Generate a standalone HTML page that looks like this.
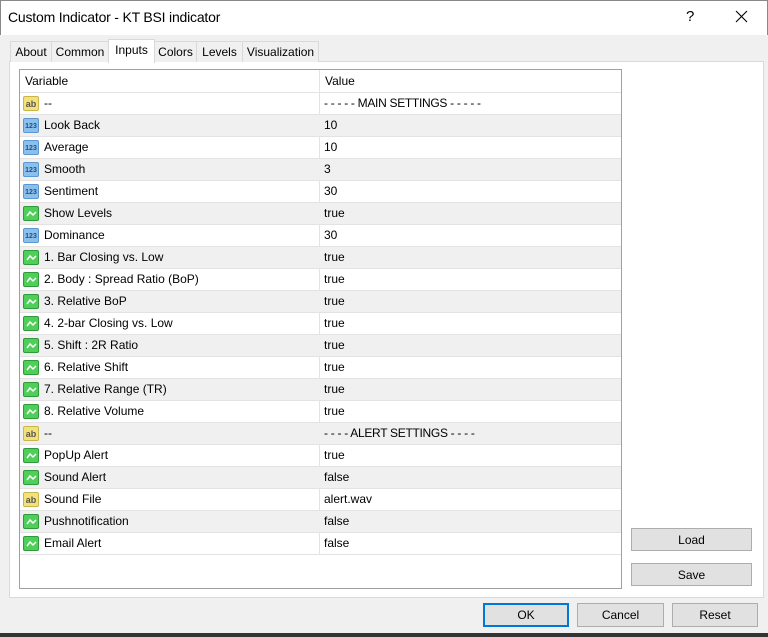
<!DOCTYPE html><html><head><style>
body{margin:0;width:768px;height:637px;background:#f0f0f0;font-family:"Liberation Sans",sans-serif;font-size:12px;color:#000;position:relative;overflow:hidden}
.a{position:absolute}
.title{left:0;top:0;width:766px;height:34px;background:#fff;border:1px solid #888;border-bottom:none}
.tab{top:41px;height:20px;border:1px solid #d9d9d9;border-bottom:none;background:#f0f0f0;line-height:20px;text-align:center;font-size:12px}
.panel{left:9px;top:61px;width:753px;height:535px;background:#fff;border:1px solid #d9d9d9}
.grid{left:19px;top:69px;width:601px;height:518px;border:1px solid #a0a0a0;background:#fff}
.row{position:absolute;left:0;width:601px;height:22px;border-top:1px solid #e3e3e3;box-sizing:border-box;line-height:21px}
.g{background:#f0f0f0}
.row span{position:absolute;left:24px}
.row b{font-weight:normal;position:absolute;left:304px}
.ic{position:absolute;left:3px;top:3px;width:16px;height:15px;border-radius:2px;font-size:7px;line-height:15px;text-align:center;font-weight:bold}
.ab{background:#f3e27a;border:1px solid #c9b64a;color:#555;box-sizing:border-box;font-size:9px}
.n{background:#8cc0ec;border:1px solid #5c98cf;color:#1a4f8a;box-sizing:border-box}
.t{background:#4fcf5a;border:1px solid #2e9a38;box-sizing:border-box}
.btn{background:#e1e1e1;border:1px solid #adadad;text-align:center;line-height:22px;box-sizing:border-box;font-size:12px}
</style></head><body>
<div class="a title"></div>
<div class="a" style="left:8px;top:9px;font-size:14px;letter-spacing:-0.2px">Custom Indicator - KT BSI indicator</div>
<div class="a" style="left:686px;top:8px;font-size:15px">?</div>
<svg class="a" style="left:735px;top:10px" width="13" height="13"><path d="M1 1L12 12M12 1L1 12" stroke="#000" stroke-width="1.1"/></svg>
<div class="a panel"></div>
<div class="a tab" style="left:10px;width:40px">About</div>
<div class="a tab" style="left:51px;width:56px">Common</div>
<div class="a tab" style="left:108px;top:39px;height:23px;width:45px;background:#fff;z-index:2">Inputs</div>
<div class="a tab" style="left:154px;width:41px">Colors</div>
<div class="a tab" style="left:196px;width:45px">Levels</div>
<div class="a tab" style="left:242px;width:75px">Visualization</div>
<div class="a grid">
<div class="row" style="top:0;border:none;line-height:22px"><span style="left:5px">Variable</span><b style="left:305px">Value</b></div>
<div class="a" style="left:299px;top:0;width:1px;height:484px;background:#e3e3e3"></div>
<div id="rows"></div>
</div>
<div class="a btn" style="left:631px;top:528px;width:121px;height:23px">Load</div>
<div class="a btn" style="left:631px;top:563px;width:121px;height:23px">Save</div>
<div class="a btn" style="left:483px;top:603px;width:86px;height:24px;border:2px solid #0078d7;line-height:20px">OK</div>
<div class="a btn" style="left:577px;top:603px;width:87px;height:24px">Cancel</div>
<div class="a btn" style="left:672px;top:603px;width:86px;height:24px">Reset</div>
<div class="a" style="left:0;top:633px;width:768px;height:4px;background:#333"></div>
<script>
var d=[["ab","--","- - - - - MAIN SETTINGS - - - - -"],["n","Look Back","10"],["n","Average","10"],["n","Smooth","3"],["n","Sentiment","30"],["t","Show Levels","true"],["n","Dominance","30"],["t","1. Bar Closing vs. Low","true"],["t","2. Body : Spread Ratio (BoP)","true"],["t","3. Relative BoP","true"],["t","4. 2-bar Closing vs. Low","true"],["t","5. Shift : 2R Ratio","true"],["t","6. Relative Shift","true"],["t","7. Relative Range (TR)","true"],["t","8. Relative Volume","true"],["ab","--","- - - - ALERT SETTINGS - - - -"],["t","PopUp Alert","true"],["t","Sound Alert","false"],["ab","Sound File","alert.wav"],["t","Pushnotification","false"],["t","Email Alert","false"]];
var h="";d.forEach(function(r,i){var ic=r[0]=="ab"?"ab":r[0]=="n"?"123":'<svg width="14" height="13" style="display:block"><path d="M3 9 L6 5 L9 8 L12 5" stroke="#fff" stroke-width="1.5" fill="none"/></svg>';
h+='<div class="row'+(i%2?' g':'')+'" style="top:'+(22+i*22)+'px"><div class="ic '+r[0]+'">'+ic+'</div><span>'+r[1]+'</span><b'+(r[2].length>15?' style="letter-spacing:-0.3px"':'')+'>'+r[2]+'</b></div>';});
h+='<div class="row" style="top:484px"></div>';
document.getElementById("rows").innerHTML=h;
</script>
</body></html>
